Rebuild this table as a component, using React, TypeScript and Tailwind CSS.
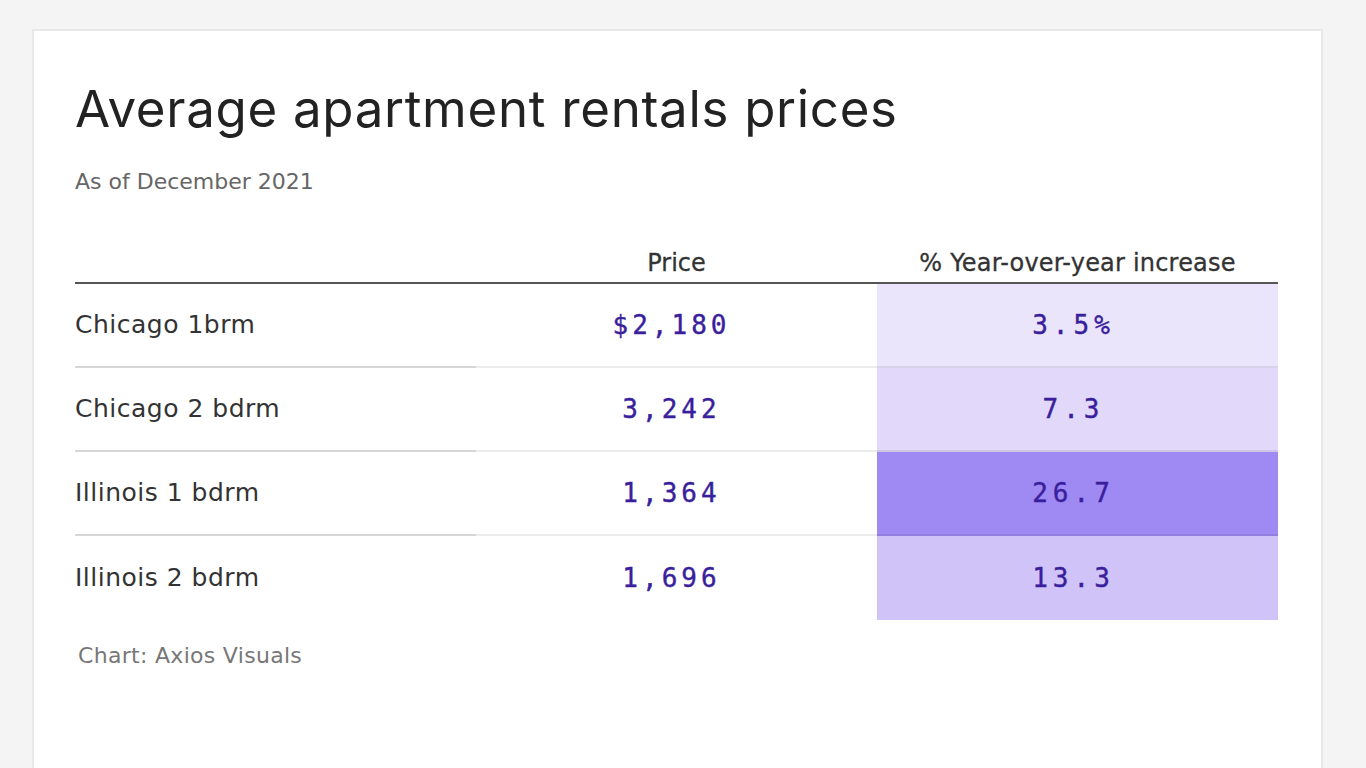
import React from "react";

const rows = [
  { label: "Chicago 1brm", price: "$2,180", pct: "3.5%", bg: "bg-[#ebe5fc]" },
  { label: "Chicago 2 bdrm", price: "3,242", pct: "7.3", bg: "bg-[#e1d8fa]" },
  { label: "Illinois 1 bdrm", price: "1,364", pct: "26.7", bg: "bg-[#9f89f3]" },
  { label: "Illinois 2 bdrm", price: "1,696", pct: "13.3", bg: "bg-[#d0c3f8]" },
];

const sans = { fontFamily: "'DejaVu Sans', 'Liberation Sans', sans-serif" };
const mono = { fontFamily: "'DejaVu Sans Mono', 'Liberation Mono', monospace" };

export default function App() {
  return (
    <div className="min-h-[768px] bg-[#f4f4f4] pt-[29px] pl-[32px] overflow-hidden" style={sans}>
      <div className="w-[1291px] h-[760px] bg-white border-2 border-[#e8e8e8] pl-[41px] pr-[43px] pt-[48px]">
        <h1 className="text-[51px] leading-[60px] text-[#222] tracking-[0.7px]" style={{ fontFamily: "Inter, 'Liberation Sans', sans-serif" }}>Average apartment rentals prices</h1>
        <p className="mt-[30px] text-[22px] leading-[26px] text-[#666]">As of December 2021</p>
        <div className="mt-[54px]">
          <div className="grid grid-cols-3 border-b-2 border-[#555] pb-[5px]">
            <div />
            <div className="text-center text-[24px] leading-[28px] text-[#333] [-webkit-text-stroke:0.3px_#333]">Price</div>
            <div className="text-center text-[24px] leading-[28px] text-[#333] tracking-[0.2px] [-webkit-text-stroke:0.3px_#333]">% Year-over-year increase</div>
          </div>
          {rows.map((r, i) => {
            const last = i === rows.length - 1;
            return (
              <div key={r.label} className="grid grid-cols-3 h-[84px]">
                <div className={`flex items-center text-[25px] text-[#333] tracking-[0.5px] ${last ? "" : "border-b-2 border-[#d6d6d6]"}`}>{r.label}</div>
                <div className={`flex items-center justify-center text-[26px] text-[#3a1f9c] tracking-[4px] pr-[10px] [-webkit-text-stroke:0.4px_#3a1f9c] ${last ? "" : "border-b-2 border-[#ececec]"}`} style={mono}>{r.price}</div>
                <div className={`flex items-center justify-center text-[26px] text-[#3a1f9c] tracking-[5px] pr-[8px] [-webkit-text-stroke:0.4px_#3a1f9c] ${r.bg} ${last ? "" : "border-b-2 border-[#00000014]"}`} style={mono}>{r.pct}</div>
              </div>
            );
          })}
          <p className="mt-[23px] ml-[3px] text-[22px] leading-[26px] text-[#777] tracking-[0.3px]">Chart: Axios Visuals</p>
        </div>
      </div>
    </div>
  );
}
